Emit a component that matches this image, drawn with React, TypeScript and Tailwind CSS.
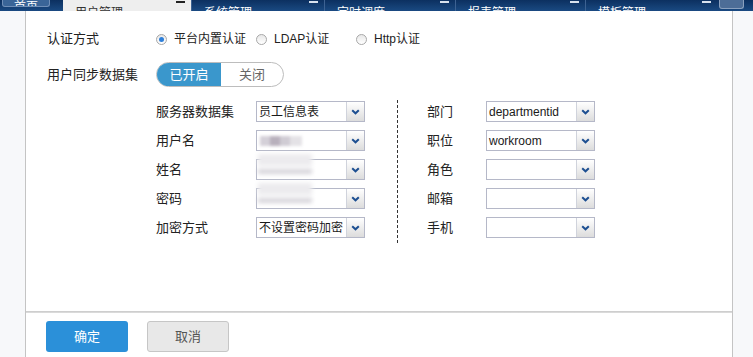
import React from "react";

const font = { fontFamily: '"Liberation Sans", "Noto Sans CJK SC", sans-serif' };

const tabs = [
  { label: "系统管理", w: "w-[133px]" },
  { label: "定时调度", w: "w-[131px]" },
  { label: "报表管理", w: "w-[130px]" },
  { label: "模板管理", w: "w-[132px]" },
];

function Chevron() {
  return (
    <svg width="9" height="6" viewBox="0 0 9 6">
      <path d="M1.2 1.2 L4.5 4.3 L7.8 1.2" fill="none" stroke="#1d4f91" strokeWidth="2" />
    </svg>
  );
}

function Select({ value, blur }: { value?: string; blur?: "dark" | "light" }) {
  return (
    <div className="relative flex h-[21px] w-[109px] border border-[#b5b8c8] bg-white">
      <div className="flex flex-1 items-center overflow-hidden whitespace-nowrap pl-[2px] pt-[1px] text-[12px] text-[#1a1a1a]">
        {value}
      </div>
      {blur === "dark" && (
        <div className="absolute left-[3px] top-[5px] flex h-[10px] gap-0 blur-[1.5px]">
          <div className="w-[10px] bg-[#d4d0d8]" />
          <div className="w-[10px] bg-[#b8b0bc]" />
          <div className="w-[10px] bg-[#d0ccd4]" />
          <div className="w-[12px] bg-[#e4e2e6]" />
        </div>
      )}
      {blur === "light" && (
        <div className="absolute left-[1px] top-[-6px] flex h-[26px] w-[54px] flex-col gap-[3px] blur-[2px]">
          <div className="h-[12px] bg-[#ecebee]" />
          <div className="h-[5px] bg-[#d6d4da]" />
        </div>
      )}
      <div className="flex w-[18px] items-center justify-center border-l border-[#d0d3dc] bg-gradient-to-b from-white to-[#dcdcdc]">
        <Chevron />
      </div>
    </div>
  );
}

function Radio({ checked, label }: { checked?: boolean; label: string }) {
  return (
    <div className="flex w-[100px] items-center gap-[7px]">
      <div className="flex h-[11px] w-[11px] items-center justify-center rounded-full border border-[#a8a8a8] bg-gradient-to-b from-[#e8e8e8] to-white">
        {checked && <div className="h-[5px] w-[5px] rounded-full bg-[#2e7fd9]" />}
      </div>
      <span className="whitespace-nowrap text-[12px] text-[#222]">{label}</span>
    </div>
  );
}

const leftRows: { label: string; value?: string; blur?: "dark" | "light" }[] = [
  { label: "服务器数据集", value: "员工信息表" },
  { label: "用户名", blur: "dark" },
  { label: "姓名", blur: "light" },
  { label: "密码", blur: "light" },
  { label: "加密方式", value: "不设置密码加密" },
];

const rightRows = [
  { label: "部门", value: "departmentid" },
  { label: "职位", value: "workroom" },
  { label: "角色", value: "" },
  { label: "邮箱", value: "" },
  { label: "手机", value: "" },
];

export default function App() {
  return (
    <div className="flex h-[357px] w-[753px] flex-col overflow-hidden bg-[#f7f8fa]" style={font}>
      {/* 顶部标签栏 */}
      <div className="flex h-[11px] shrink-0 overflow-hidden bg-gradient-to-b from-[#0c3060] to-[#1a4a82]">
        <div className="ml-[2px] flex h-[7px] w-[48px] items-end justify-center overflow-hidden rounded-b-[3px] border border-t-0 border-[#6f8fb8] bg-[#3a6598]">
          <span className="-mb-[8px] text-[12px] leading-[14px] text-white">首页</span>
        </div>
        <div className="ml-[13px] flex w-[128px] items-end justify-between overflow-hidden bg-[#eeeeee] pl-[12px] pr-[6px]">
          <span className="-mb-[9px] text-[12px] leading-[14px] text-[#333]">用户管理</span>
          <div className="mb-[8px] h-[2px] w-[9px] bg-[#222]" />
        </div>
        {tabs.map((t) => (
          <div key={t.label} className={`flex ${t.w} items-end justify-between overflow-hidden border-l border-[#3d6292] pl-[12px] pr-[6px]`}>
            <span className="-mb-[9px] text-[12px] leading-[14px] text-white">{t.label}</span>
            <div className="mb-[8px] h-[2px] w-[9px] bg-[#d8e2ee]" />
          </div>
        ))}
        <div className="ml-[2px] h-[9px] w-[25px] rounded-b-[3px] border border-t-0 border-[#8aa0be] bg-[#4d6d97]" />
      </div>

      <div className="flex flex-1">
        <div className="w-[25px] shrink-0" />
        <div className="flex w-[708px] shrink-0 flex-col border-x border-[#c4c4c4] bg-white">
          {/* 内容 */}
          <div className="h-[300px] pl-[21px] pt-[18px] text-[13px] text-[#222]">
            <div className="flex h-[20px] items-center">
              <div className="w-[109px]">认证方式</div>
              <Radio checked label="平台内置认证" />
              <Radio label="LDAP认证" />
              <Radio label="Http认证" />
            </div>
            <div className="mt-[13px] flex h-[25px] items-center">
              <div className="w-[109px]">用户同步数据集</div>
              <div className="flex h-[25px] w-[128px] overflow-hidden rounded-full border border-[#bdbdbd]">
                <div className="flex w-[64px] items-center justify-center bg-[#3a97cc] text-white">已开启</div>
                <div className="flex flex-1 items-center justify-center text-[#666]">关闭</div>
              </div>
            </div>
            <div className="mt-[14px] flex pl-[109px]">
              <div className="flex flex-col gap-[8px]">
                {leftRows.map((r) => (
                  <div key={r.label} className="flex items-center">
                    <div className="w-[100px]">{r.label}</div>
                    <Select value={r.value} blur={r.blur} />
                  </div>
                ))}
              </div>
              <div className="-mt-[1px] ml-[32px] h-[143px] border-l border-dashed border-[#333]" />
              <div className="ml-[29px] flex flex-col gap-[8px]">
                {rightRows.map((r) => (
                  <div key={r.label} className="flex items-center">
                    <div className="w-[59px]">{r.label}</div>
                    <Select value={r.value} />
                  </div>
                ))}
              </div>
            </div>
          </div>
          {/* 底部按钮 */}
          <div className="h-[2px] bg-gradient-to-b from-[#c8c8c8] to-[#e0e0e0]" />
          <div className="flex gap-[19px] pl-[20px] pt-[8px]">
            <button className="h-[31px] w-[82px] rounded-[3px] bg-[#2b90d9] text-[13px] text-white">确定</button>
            <button className="h-[31px] w-[82px] rounded-[3px] border border-[#c6c6c6] bg-[#e8e8e8] text-[13px] text-[#555]">取消</button>
          </div>
        </div>
        <div className="flex-1" />
      </div>
    </div>
  );
}
